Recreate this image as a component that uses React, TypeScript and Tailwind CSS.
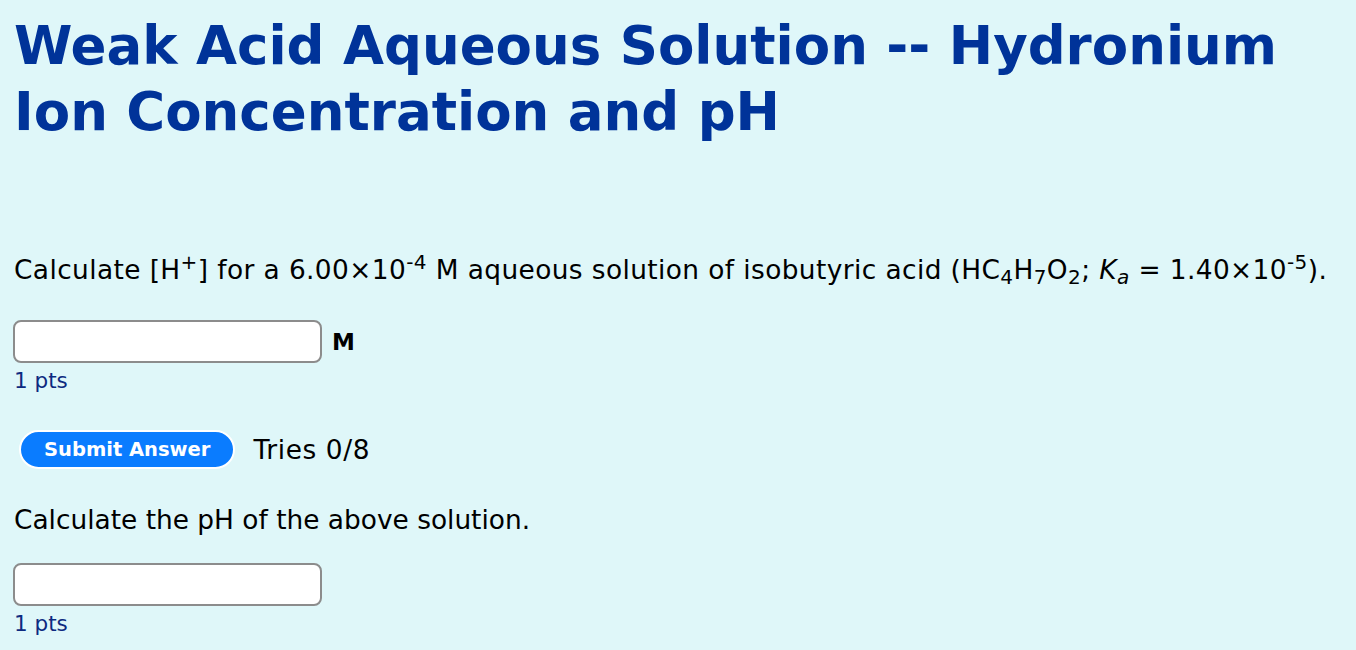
import React from 'react';

const AnswerBox: React.FC<{ unit?: string }> = ({ unit }) => (
  <div>
    <div className="flex items-center gap-[10px]">
      <input
        type="text"
        className="w-[309px] h-[43px] bg-white border-2 border-[#8c8c8c] rounded-[8px] outline-none px-2 text-[22px]"
      />
      {unit && <span className="font-bold text-[23px] leading-[26px] text-black">{unit}</span>}
    </div>
    <div className="text-[21.5px] leading-[24px] text-[#0d2a80] mt-[6px] ml-[1px]">1 pts</div>
  </div>
);

const App: React.FC = () => {
  return (
    <div
      className="min-h-screen bg-[#dff7f9] px-[14px] pt-[13px] text-black -ml-[1px]"
      style={{ fontFamily: '"DejaVu Sans", Verdana, sans-serif' }}
    >
      <h1 className="text-[53px] leading-[66px] font-bold text-[#003399] ml-[1px]">
        Weak Acid Aqueous Solution -- Hydronium
        <br />
        Ion Concentration and pH
      </h1>

      <p className="mt-[110px] text-[26.4px] leading-[30px] ml-[1px] tracking-[0.4px]">
        Calculate [H<sup className="text-[20px]">+</sup>] for a 6.00×10<sup className="text-[20px]">-4</sup> M
        aqueous solution of isobutyric acid (HC<sub className="text-[20px]">4</sub>H
        <sub className="text-[20px]">7</sub>O<sub className="text-[20px]">2</sub>; <i>K</i>
        <sub className="text-[20px] italic">a</sub> = 1.40×10<sup className="text-[20px]">-5</sup>).
      </p>

      <div className="mt-[35px]">
        <AnswerBox unit="M" />
      </div>

      <div className="mt-[37px] flex items-center gap-[18px] ml-[6px]">
        <button className="h-[39px] px-[23px] rounded-full bg-[#0a7cff] border-2 border-white text-white font-bold text-[19.5px] leading-none">
          Submit Answer
        </button>
        <span className="text-[26.4px] leading-[30px] tracking-[0.6px]">Tries 0/8</span>
      </div>

      <p className="mt-[36px] text-[26.4px] leading-[30px] ml-[1px]">Calculate the pH of the above solution.</p>

      <div className="mt-[28px]">
        <AnswerBox />
      </div>
    </div>
  );
};

export default App;
